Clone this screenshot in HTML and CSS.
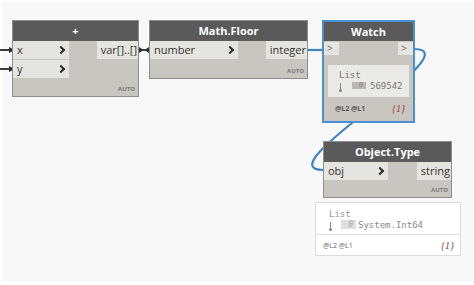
FILE: index.html
```html
<!DOCTYPE html>
<html lang="en">
<head>
    <meta charset="UTF-8">
    <title>Dynamo Graph</title>
    <link rel="stylesheet" href="styles.css">
</head>
<body>
    <div class="canvas">
        <svg class="wires" width="474" height="285">
            <path class="wire-black" d="M0,50 L11,50 M0,69 L11,69 M139,50 L149,50"/>
            <path class="cap" d="M9,47 L12,48.5 L12,51.5 L9,53 Z M9,66 L12,67.5 L12,70.5 L9,72 Z M139,47 L142,49 L142,51 L139,53 Z M149,47 L146,49 L146,51 L149,53 Z"/>
            <path class="wire-blue" d="M308,50 L323,50"/>
            <path class="wire-blue" d="M414,49 C474,49 263,170 323,170"/>
        </svg>

        <!-- + node -->
        <div class="node node-add">
            <div class="node-head">+</div>
            <div class="node-body">
                <div class="inputs">
                    <div class="port in-port">x <span class="chev"></span></div>
                    <div class="port in-port">y <span class="chev"></span></div>
                </div>
                <div class="outputs">
                    <div class="port out-port">var[]..[]</div>
                </div>
            </div>
            <div class="node-foot">AUTO</div>
        </div>

        <!-- Math.Floor -->
        <div class="node node-floor">
            <div class="node-head">Math.Floor</div>
            <div class="node-body">
                <div class="inputs">
                    <div class="port in-port">number <span class="chev"></span></div>
                </div>
                <div class="outputs">
                    <div class="port out-port">integer</div>
                </div>
            </div>
            <div class="node-foot">AUTO</div>
        </div>

        <!-- Watch -->
        <div class="node node-watch">
            <div class="node-head">Watch</div>
            <div class="node-body">
                <div class="port watch-port">&gt;</div>
                <div class="port watch-port">&gt;</div>
            </div>
            <div class="watch-view">
                <div class="list-title">List</div>
                <div class="list-row">
                    <span class="branch"></span>
                    <span class="idx">0</span>
                    <span class="val">569542</span>
                </div>
            </div>
            <div class="levels">
                <span>@L2 @L1</span>
                <span class="count">{1}</span>
            </div>
        </div>

        <!-- Object.Type -->
        <div class="node node-type">
            <div class="node-head">Object.Type</div>
            <div class="node-body">
                <div class="inputs">
                    <div class="port in-port">obj <span class="chev"></span></div>
                </div>
                <div class="outputs">
                    <div class="port out-port">string</div>
                </div>
            </div>
            <div class="node-foot">AUTO</div>
        </div>

        <!-- preview bubble -->
        <div class="preview">
            <div class="preview-view">
                <div class="list-title">List</div>
                <div class="list-row">
                    <span class="branch"></span>
                    <span class="idx">0</span>
                    <span class="val">System.Int64</span>
                </div>
            </div>
            <div class="levels">
                <span>@L2 @L1</span>
                <span class="count">{1}</span>
            </div>
        </div>
    </div>
</body>
</html>
```

FILE: styles.css
```css
body {
    margin: 0;
    background: #fff;
    font-family: 'Open Sans', sans-serif;
}
.canvas {
    position: relative;
    width: 474px;
    height: 285px;
    overflow: hidden;
    background: #f8f8f8;
    box-shadow: inset 2px 2px 0 #fff, inset 0 -3px 0 #fff;
}
.wires {
    position: absolute;
    left: 0;
    top: 0;
    z-index: 0;
}
.wire-black {
    stroke: #3a3a3a;
    stroke-width: 2;
    fill: none;
}
.cap {
    fill: #2e2e2e;
}
.wire-blue {
    stroke: #3e82c6;
    stroke-width: 2.2;
    fill: none;
}

.node {
    position: absolute;
    z-index: 1;
    box-sizing: border-box;
    background: #c9c6c0;
    border: 1px solid #8d8d8d;
    display: flex;
    flex-direction: column;
}
.node-head {
    height: 20px;
    background: #5a5a5a;
    color: #fff;
    font-weight: bold;
    font-size: 11px;
    line-height: 20px;
    text-align: center;
}
.node-body {
    display: flex;
    justify-content: space-between;
}
.inputs, .outputs {
    display: flex;
    flex-direction: column;
    gap: 1px;
}
.port {
    box-sizing: border-box;
    height: 18px;
    background: #e6e4df;
    color: #333;
    font-size: 11px;
    line-height: 18px;
    display: flex;
    align-items: center;
    justify-content: space-between;
    padding: 0 3px 0 4px;
}
.out-port {
    justify-content: flex-end;
    padding: 0 1px 0 3px;
}
.chev {
    width: 4px;
    height: 4px;
    border-top: 2px solid #2d2d2d;
    border-right: 2px solid #2d2d2d;
    transform: rotate(45deg);
    margin-right: 2px;
}
.node-foot {
    margin-top: auto;
    text-align: right;
    font-size: 6px;
    font-weight: bold;
    color: #777;
    padding: 0 3px 3px 0;
    line-height: 8px;
}

.node-add {
    left: 12px;
    top: 20px;
    width: 127px;
    height: 77px;
}
.node-add .inputs { width: 56px; }
.node-add .outputs { width: 41px; }

.node-floor {
    left: 149px;
    top: 20px;
    width: 159px;
    height: 59px;
}
.node-floor .inputs { width: 88px; }
.node-floor .outputs { width: 41px; }

.node-type {
    left: 323px;
    top: 141px;
    width: 129px;
    height: 57px;
}
.node-type .inputs { width: 64px; }
.node-type .outputs { width: 34px; }

.node-watch {
    left: 322px;
    top: 20px;
    width: 93px;
    height: 103px;
    border: 2px solid #4a90d4;
}
.node-watch .node-head {
    height: 19px;
    line-height: 19px;
}
.watch-port {
    width: 15px;
    height: 13px;
    margin-top: 1px;
    padding: 0 0 0 3px;
    color: #666;
    font-size: 10px;
    line-height: 13px;
}
.watch-view {
    margin: 10px 4px 0 4px;
    height: 32px;
    background: #ebe9e5;
    box-sizing: border-box;
    padding: 5px 0 0 11px;
}
.list-title {
    font-family: 'DejaVu Sans Mono', monospace;
    font-size: 9px;
    color: #777;
    line-height: 10px;
}
.list-row {
    display: flex;
    align-items: center;
    height: 11px;
    font-family: 'DejaVu Sans Mono', monospace;
    font-size: 9px;
    color: #777;
}
.branch {
    position: relative;
    width: 1px;
    height: 8px;
    background: #888;
    margin: 2px 11px 0 1px;
}
.branch::after {
    content: "";
    position: absolute;
    left: -1px;
    bottom: -1px;
    width: 3px;
    height: 3px;
    border-radius: 50%;
    background: #888;
}
.idx {
    background: #b9b7b3;
    color: #8a8a8a;
    font-style: italic;
    width: 14px;
    height: 7px;
    line-height: 7px;
    text-align: right;
    padding: 0 3px 0 0;
    box-sizing: border-box;
    margin-right: 4px;
    font-size: 7px;
    overflow: hidden;
}
.levels {
    display: flex;
    justify-content: space-between;
    align-items: center;
    font-size: 7px;
    font-weight: bold;
    color: #555;
    padding: 0 8px 0 11px;
    height: 22px;
}
.count {
    font-family: 'Liberation Serif', serif;
    font-style: italic;
    font-weight: normal;
    font-size: 10px;
    color: #8a3c3c;
}

.preview {
    position: absolute;
    z-index: 1;
    left: 315px;
    top: 202px;
    width: 146px;
    height: 54px;
    box-sizing: border-box;
    background: #fff;
    border: 1px solid #dcdcdc;
}
.preview-view {
    height: 32px;
    box-sizing: border-box;
    padding: 6px 0 0 13px;
    border-bottom: 1px solid #e2e2e2;
}
.preview .list-title { color: #999; }
.preview .list-row { color: #8a8a8a; }
.preview .idx {
    background: #dedede;
    color: #aaa;
    width: 15px;
    height: 9px;
    line-height: 9px;
    font-size: 8px;
    margin-right: 2px;
}
.preview .branch {
    margin-right: 10px;
}
.preview .levels {
    height: 20px;
    padding: 0 6px 0 7px;
    font-weight: normal;
    color: #666;
}
```
